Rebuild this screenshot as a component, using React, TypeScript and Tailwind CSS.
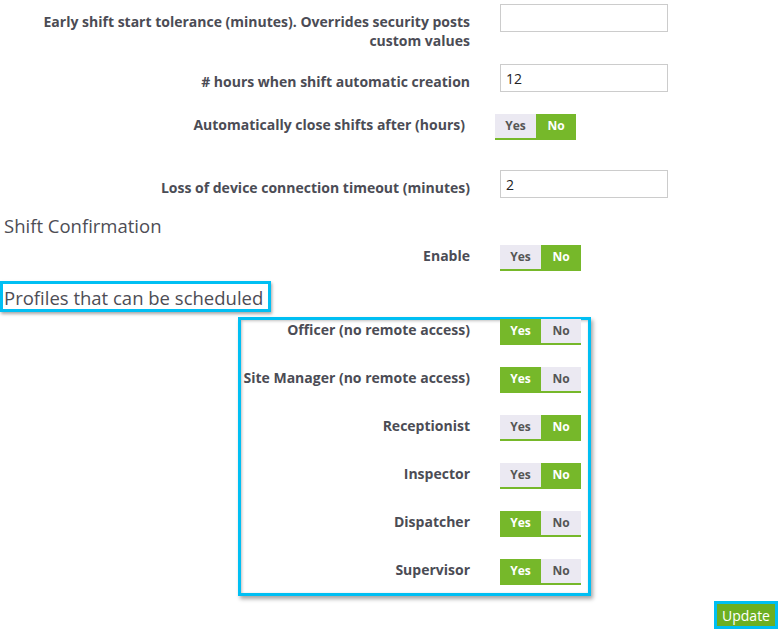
import React from "react";

const font = { fontFamily: '"Open Sans", "Liberation Sans", sans-serif' };

function Toggle({ yes, className = "" }: { yes: boolean; className?: string }) {
  return (
    <div className={`flex h-[26px] w-[81px] shrink-0 border-b-2 border-[#76b82a] text-[12px] font-bold ${className}`}>
      <div
        className={`flex w-[41px] items-center justify-center ${
          yes ? "bg-[#76b82a] text-white" : "bg-[#ebe9f2] text-[#555]"
        }`}
      >
        Yes
      </div>
      <div
        className={`flex w-[40px] items-center justify-center ${
          yes ? "bg-[#ebe9f2] text-[#555]" : "bg-[#76b82a] text-white"
        }`}
      >
        No
      </div>
    </div>
  );
}

function Input({ value }: { value: string }) {
  return (
    <div className="flex h-[28px] w-[168px] shrink-0 items-center border border-[#cccccc] bg-white px-[5px] text-[14px] text-[#222]">
      {value}
    </div>
  );
}

const labelCls = "text-right text-[14px] font-bold leading-[19px] text-[#4b4c55]";

export default function App() {
  const profiles: [string, boolean][] = [
    ["Officer (no remote access)", true],
    ["Site Manager (no remote access)", true],
    ["Receptionist", false],
    ["Inspector", false],
    ["Dispatcher", true],
    ["Supervisor", true],
  ];
  return (
    <div style={font} className="h-[629px] w-[778px] overflow-hidden bg-white pt-[4px]">
      {/* Row 1 */}
      <div className="flex gap-[30px]">
        <div className={`${labelCls} w-[470px] pl-[40px] pt-[8px]`}>
          Early shift start tolerance (minutes). Overrides security posts custom values
        </div>
        <Input value="" />
      </div>
      {/* Row 2 */}
      <div className="mt-[14px] flex gap-[30px]">
        <div className={`${labelCls} w-[470px] pt-[8px]`}># hours when shift automatic creation</div>
        <Input value="12" />
      </div>
      {/* Row 3 */}
      <div className="mt-[22px] flex gap-[30px]">
        <div className={`${labelCls} w-[465px] pt-[1px]`}>Automatically close shifts after (hours)</div>
        <Toggle yes={false} />
      </div>
      {/* Row 4 */}
      <div className="mt-[30px] flex gap-[30px]">
        <div className={`${labelCls} w-[470px] pt-[8px]`}>Loss of device connection timeout (minutes)</div>
        <Input value="2" />
      </div>
      {/* Heading */}
      <div className="mt-[15px] whitespace-nowrap pl-[4px] text-[18.5px] leading-[26px] text-[#4d4d55]">Shift Confirmation</div>
      <div className="mt-[6px] flex gap-[30px]">
        <div className={`${labelCls} w-[470px] pt-[1px]`}>Enable</div>
        <Toggle yes={false} />
      </div>
      {/* Profiles heading */}
      <div className="mt-[10px] h-[31px] w-[271px] whitespace-nowrap border-[3px] border-[#00bff3] pl-[1px] pt-[2px] text-[18.5px] leading-[24px] text-[#4d4d55] shadow-[1px_2px_3px_rgba(0,0,0,0.35)]">
        Profiles that can be scheduled
      </div>
      {/* Profiles box */}
      <div className="ml-[238px] mt-[5px] w-[353px] border-[3px] border-[#00bff3] pb-[8px] pr-[7px] shadow-[2px_3px_4px_rgba(0,0,0,0.35),inset_1px_1px_3px_rgba(0,0,0,0.25)]">
        <div className="-mt-[1px] flex flex-col gap-[22px]">
          {profiles.map(([name, yes]) => (
            <div key={name} className="flex gap-[30px]">
              <div className={`${labelCls} w-[229px] whitespace-nowrap pt-[1px]`}>{name}</div>
              <Toggle yes={yes} />
            </div>
          ))}
        </div>
      </div>
      {/* Update */}
      <div className="mt-[5px] flex justify-end">
        <div className="flex h-[28px] w-[64px] items-center justify-center border-[3px] border-[#00bff3] bg-[#6caf22] pt-[1px] text-[14px] text-white">
          Update
        </div>
      </div>
    </div>
  );
}
